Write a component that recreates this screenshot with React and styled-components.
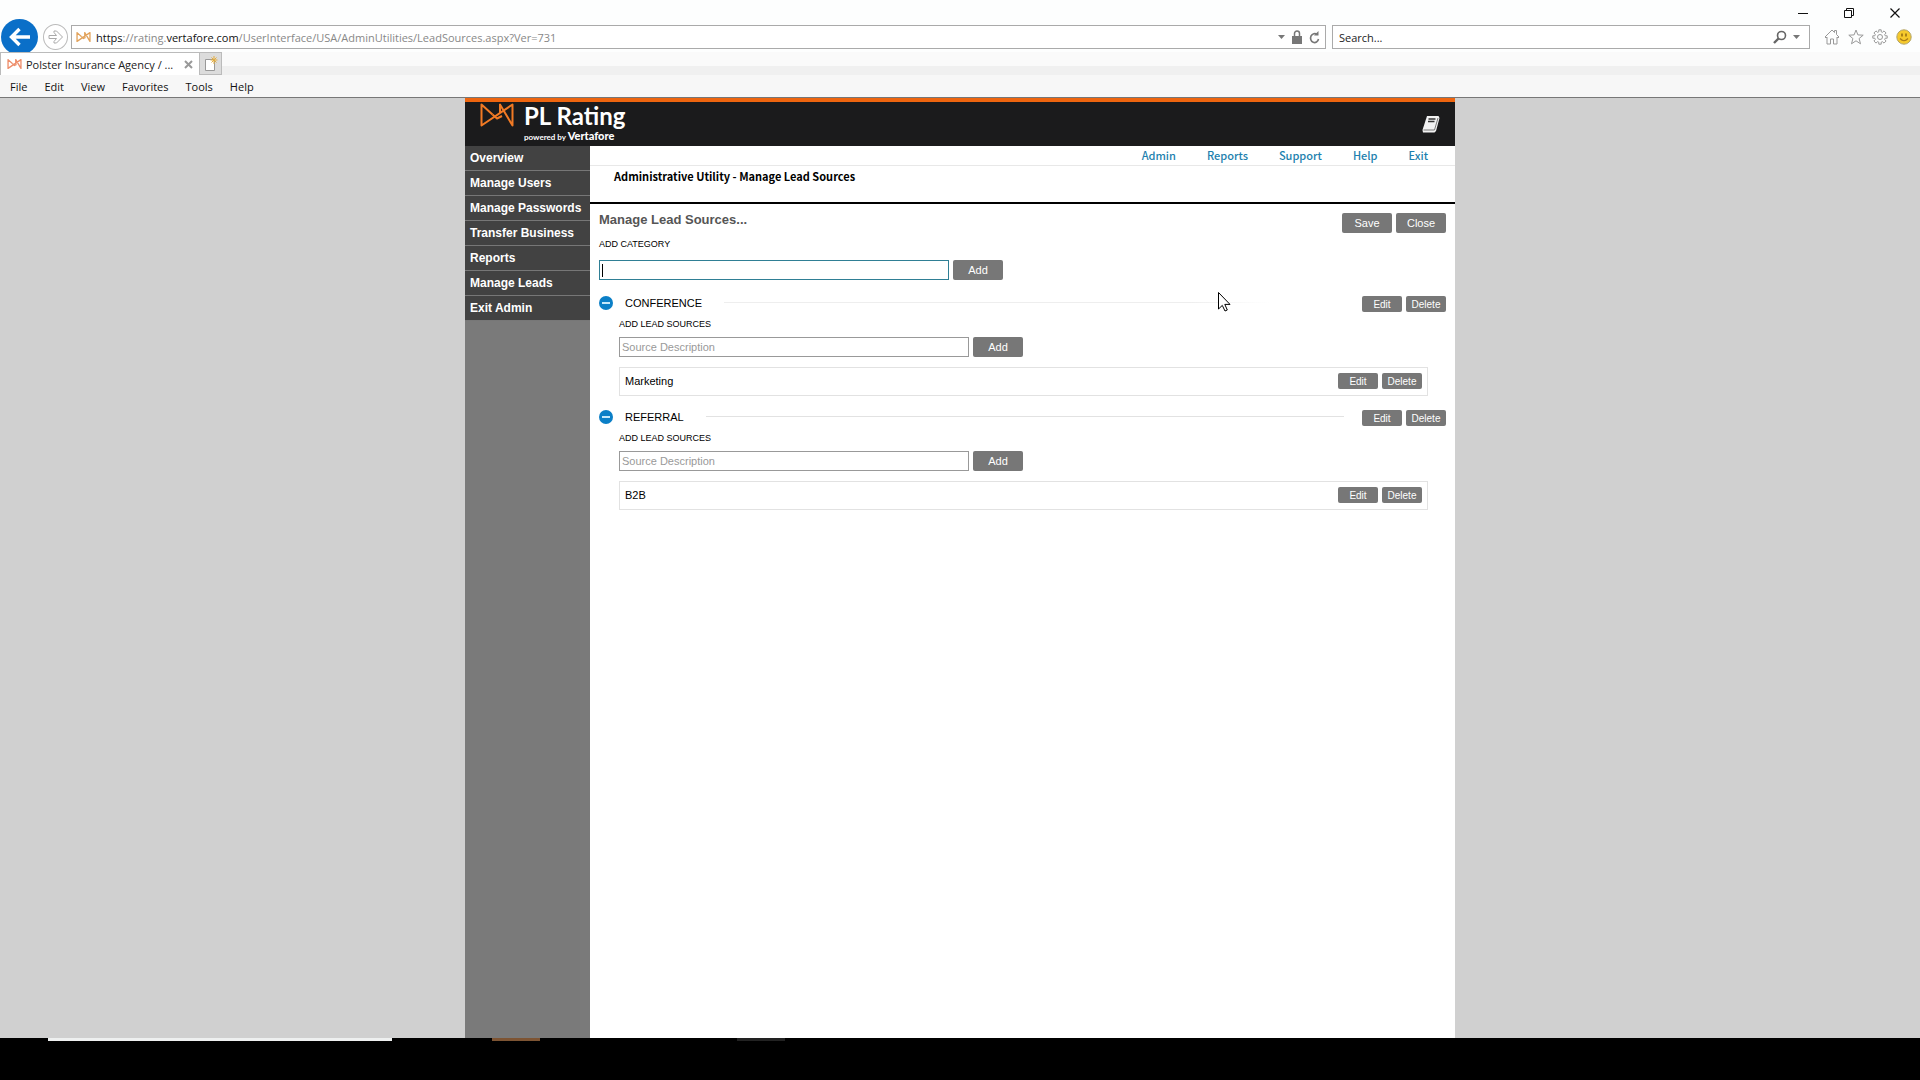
import React from "react";
import styled, { createGlobalStyle } from "styled-components";

const GlobalStyle = createGlobalStyle`
  * {
    box-sizing: border-box;
  }

  body {
    margin: 0;
    background: #000;
    font-family: "Liberation Sans", Arial, sans-serif;
    font-size: 12px;
  }

  button,
  input {
    font-family: inherit;
  }

  h1,
  h2,
  h3,
  ul {
    margin: 0;
    padding: 0;
  }
`;

const menus = ["File", "Edit", "View", "Favorites", "Tools", "Help"];
const topLinks = ["Admin", "Reports", "Support", "Help", "Exit"];
const sideLinks = [
  "Overview",
  "Manage Users",
  "Manage Passwords",
  "Transfer Business",
  "Reports",
  "Manage Leads",
  "Exit Admin",
];
const categories = [
  { id: "conference", name: "CONFERENCE", sources: ["Marketing"], faded: true },
  { id: "referral", name: "REFERRAL", sources: ["B2B"], faded: false },
];

export default function App() {
  return (
    <Screen>
      <GlobalStyle />
      <Browser />
      <Viewport>
        <Page>
          <Banner>
            <Brand>
              <VertaforeMark width={34} height={24} strokeWidth={2} color="#f27a24" />
              <BrandText>
                <BrandName>PL Rating</BrandName>
                <BrandBy>
                  powered by <strong>Vertafore</strong>
                </BrandBy>
              </BrandText>
            </Brand>
            <IconButton type="button" aria-label="Guide">
              <BookIcon />
            </IconButton>
          </Banner>
          <Columns>
            <Sidebar>
              {sideLinks.map((label) => (
                <SideLink key={label} href="#">
                  {label}
                </SideLink>
              ))}
            </Sidebar>
            <Main>
              <TopNav>
                {topLinks.map((label) => (
                  <TopLink key={label} href="#">
                    {label}
                  </TopLink>
                ))}
              </TopNav>
              <PageTitle>Administrative Utility - Manage Lead Sources</PageTitle>
              <LeadSources />
            </Main>
          </Columns>
        </Page>
      </Viewport>
      <Taskbar>
        <TaskStrip $left={48} $width={344} $color="#eef0f0" />
        <TaskStrip $left={100} $width={48} $color="#7d5433" />
        <TaskStrip $left={197} $width={48} $color="#222" />
      </Taskbar>
    </Screen>
  );
}

function Browser() {
  return (
    <Chrome>
      <WindowButtons>
        <IconButton type="button" aria-label="Minimize">
          <svg width="10" height="10">
            <path d="M0 5.5H10" stroke="#111" />
          </svg>
        </IconButton>
        <IconButton type="button" aria-label="Restore">
          <svg width="10" height="10" fill="none" stroke="#111">
            <path d="M.5 2.5h7v7h-7zM2.500 2.500V.5h7v7h-2" />
          </svg>
        </IconButton>
        <IconButton type="button" aria-label="Close window">
          <svg width="10" height="10">
            <path d="M.5 .5L9.500 9.500M9.500 .5L.5 9.500" stroke="#111" strokeWidth="1.200" />
          </svg>
        </IconButton>
      </WindowButtons>
      <AddressRow>
        <BackButton type="button" aria-label="Back">
          <svg width="24" height="20" fill="none" stroke="#fff" strokeWidth="3.400">
            <path d="M22 10H4M11.500 2L3.500 10L11.500 18" />
          </svg>
        </BackButton>
        <ForwardButton type="button" aria-label="Forward">
          <svg width="16" height="14" fill="none" stroke="#aaa">
            <path d="M1 5.500H8.500L6 2.500V1H8.500L14.500 7L8.500 13H6V11.500L8.500 8.500H1Z" />
          </svg>
        </ForwardButton>
        <AddressBar>
          <VertaforeMark width={15} height={10} strokeWidth={1.4} color="#e2a35c" />
          <Url>
            <b>https</b>://rating.<b>vertafore.com</b>
            /UserInterface/USA/AdminUtilities/LeadSources.aspx?Ver=731
          </Url>
          <BarIcons>
            <Caret />
            <svg width="10" height="14" viewBox="0 0 10 14">
              <path d="M2.500 6V3.500a2.500 2.500 0 0 1 5 0V6" fill="none" stroke="#777" strokeWidth="1.500" />
              <path d="M0 6H10V14H0Z" fill="#777" />
            </svg>
            <svg width="11" height="13" viewBox="0 0 11 13">
              <path d="M8 3.500A4 4.500 0 1 0 9.500 8" fill="none" stroke="#777" strokeWidth="1.600" />
              <path d="M5 4.500H9.500V0Z" fill="#777" />
            </svg>
          </BarIcons>
        </AddressBar>
        <SearchBar>
          <SearchInput aria-label="Search the web" placeholder="Search..." />
          <svg width="14" height="14" viewBox="0 0 14 14" fill="none" stroke="#666">
            <circle cx="8.500" cy="5.500" r="4" strokeWidth="1.600" />
            <path d="M5.500 8.500L1 13" strokeWidth="2.400" />
          </svg>
          <Caret />
        </SearchBar>
        <Tools>
          <svg width="16" height="16" viewBox="0 0 16 16" fill="none" stroke="#999">
            <path d="M1 8L8 1L10.500 3.500V1.500H12.500V5.500L15 8L14 9L13 8V15H9.500V10H6.500V15H3V8L2 9Z" />
          </svg>
          <svg width="16" height="16" viewBox="0 0 16 16" fill="none" stroke="#999">
            <path d="M8 1L9.900 5.900L15.200 6.200L11.100 9.500L12.500 14.800L8 11.800L3.500 14.800L4.900 9.500L.8 6.200L6.100 5.900Z" />
          </svg>
          <svg width="16" height="16" viewBox="0 0 16 16" fill="none" stroke="#999">
            <path d="M6.800 .8H9.200V2.800L10.500 3.300L12 1.900L14.100 4L12.700 5.500L13.200 6.800H15.200V9.200H13.200L12.700 10.500L14.100 12L12 14.100L10.500 12.700L9.200 13.200V15.200H6.800V13.200L5.500 12.700L4 14.100L1.900 12L3.300 10.500L2.800 9.200H.8V6.800H2.800L3.300 5.500L1.900 4L4 1.900L5.500 3.300L6.800 2.800Z" />
            <circle cx="8" cy="8" r="2.500" />
          </svg>
          <svg width="16" height="16" viewBox="0 0 16 16">
            <circle cx="8" cy="8" r="7.200" fill="#f6c92c" stroke="#b3a468" />
            <path d="M6 4.500V7.500M10 4.500V7.500" stroke="#8a6312" strokeWidth="1.400" />
            <path d="M4 9.500Q8 14 12 9.500" fill="none" stroke="#a87b17" strokeWidth="1.200" />
          </svg>
        </Tools>
      </AddressRow>
      <TabStrip>
        <Tab>
          <VertaforeMark width={15} height={10} strokeWidth={1.4} color="#ee8e6b" />
          <TabTitle>Polster Insurance Agency / ...</TabTitle>
          <IconButton type="button" aria-label="Close tab">
            <svg width="9" height="9">
              <path d="M1 1L8 8M8 1L1 8" stroke="#999" strokeWidth="2" />
            </svg>
          </IconButton>
        </Tab>
        <NewTab type="button" aria-label="New tab">
          <svg width="14" height="16" viewBox="0 0 14 16">
            <path d="M1.500 3.500H10.500V14.500H1.500Z" fill="#fff" stroke="#999" />
            <path d="M10 0V8M6.500 4H13.500M7.500 1.500L12.500 6.500M12.500 1.500L7.500 6.500" stroke="#e5ad3d" />
          </svg>
        </NewTab>
      </TabStrip>
      <MenuBar>
        {menus.map((label) => (
          <MenuButton key={label} type="button">
            {label}
          </MenuButton>
        ))}
      </MenuBar>
    </Chrome>
  );
}

function LeadSources() {
  return (
    <Content>
      <HeadingRow>
        <Heading>Manage Lead Sources...</Heading>
        <ButtonGroup>
          <Button type="button">Save</Button>
          <Button type="button">Close</Button>
        </ButtonGroup>
      </HeadingRow>
      <FieldLabel htmlFor="category">ADD CATEGORY</FieldLabel>
      <AddRow $gapTop={7} $gapBottom={2}>
        <TextField id="category" $active />
        <Button type="button">Add</Button>
      </AddRow>
      {categories.map((category) => (
        <Category key={category.id} category={category} />
      ))}
      <Cursor width="13" height="20" viewBox="0 0 13 20">
        <path
          d="M.5 .5V17L4.300 13.400L7 19L9.300 18L6.800 12.400H12Z"
          fill="#fff"
          stroke="#000"
        />
      </Cursor>
    </Content>
  );
}

function Category({ category }) {
  return (
    <CategoryBlock>
      <CategoryHead>
        <Toggle type="button" aria-label={`Collapse ${category.name}`}>
          <svg width="14" height="14">
            <circle cx="7" cy="7" r="7" fill="#0b7fc7" />
            <path d="M3 7H11" stroke="#c5e8fa" strokeWidth="2" />
          </svg>
        </Toggle>
        <CategoryName>{category.name}</CategoryName>
        <Rule $faded={category.faded} />
        <ButtonGroup>
          <Button type="button" $small>
            Edit
          </Button>
          <Button type="button" $small>
            Delete
          </Button>
        </ButtonGroup>
      </CategoryHead>
      <CategoryBody>
        <FieldLabel htmlFor={category.id}>ADD LEAD SOURCES</FieldLabel>
        <AddRow $gapTop={4}>
          <TextField id={category.id} placeholder="Source Description" />
          <Button type="button">Add</Button>
        </AddRow>
        <SourceList>
          {category.sources.map((source) => (
            <Source key={source}>
              {source}
              <ButtonGroup>
                <Button type="button" $small>
                  Edit
                </Button>
                <Button type="button" $small>
                  Delete
                </Button>
              </ButtonGroup>
            </Source>
          ))}
        </SourceList>
      </CategoryBody>
    </CategoryBlock>
  );
}

function VertaforeMark({ width, height, color, strokeWidth }) {
  return (
    <svg
      width={width}
      height={height}
      viewBox="0 0 34 24"
      fill="none"
      stroke={color}
      strokeWidth={(strokeWidth * 34) / width}
      strokeLinejoin="round"
    >
      <path d="M12.500 11.500L1.500 1.500V22.500L32.500 1.500V22.500L20 1.500V9.500" />
      <path d="M12.500 11.500L17 15.500L22 13" />
    </svg>
  );
}

function BookIcon() {
  return (
    <svg width="18" height="18" viewBox="0 0 18 18">
      <path d="M5 1H16.500L17.500 3L14 16L12.500 17.500H1L.5 15Z" fill="#f2f2f2" />
      <path d="M1.500 15H12.500L16 3" fill="none" stroke="#777" />
      <path d="M6.500 4H13.500M6 6.500H12.500" stroke="#333" strokeWidth="1.300" />
    </svg>
  );
}

const Caret = () => (
  <svg width="7" height="4">
    <path d="M0 0H7L3.500 4Z" fill="#777" />
  </svg>
);

const Screen = styled.div`
  min-height: 100vh;
  display: flex;
  flex-direction: column;
`;

const IconButton = styled.button`
  display: flex;
  padding: 0;
  border: 0;
  background: none;
`;

const Chrome = styled.header`
  background: #fdfefe;
  border-bottom: 1px solid #777;
  font-family: "Open Sans", "Segoe UI", sans-serif;
`;

const WindowButtons = styled.div`
  height: 25px;
  display: flex;
  justify-content: flex-end;
  align-items: center;
  gap: 36px;
  padding-right: 20px;
`;

const AddressRow = styled.div`
  height: 27px;
  display: flex;
  align-items: flex-start;
`;

const BackButton = styled.button`
  width: 37px;
  height: 36px;
  flex: none;
  display: flex;
  align-items: center;
  justify-content: center;
  margin: -6px 5px 0 1px;
  padding: 0;
  border: 0;
  border-radius: 50%;
  background: #0a6fc8;
`;

const ForwardButton = styled.button`
  width: 25px;
  height: 26px;
  flex: none;
  display: flex;
  align-items: center;
  justify-content: center;
  margin: -1px 3px 0 0;
  padding: 0;
  border: 1px solid #bbb;
  border-radius: 50%;
  background: #fff;
`;

const AddressBar = styled.div`
  flex: 1;
  height: 24px;
  display: flex;
  align-items: center;
  gap: 5px;
  padding: 0 5px 0 4px;
  border: 1px solid #aaa;
  background: #fff;
`;

const Url = styled.span`
  flex: 1;
  color: #888;
  font-size: 11px;
  white-space: nowrap;

  b {
    color: #111;
    font-weight: 400;
  }
`;

const BarIcons = styled.div`
  display: flex;
  align-items: center;
  gap: 7px;
`;

const SearchBar = styled.div`
  width: 25%;
  max-width: 478px;
  height: 24px;
  display: flex;
  align-items: center;
  gap: 6px;
  margin-left: 6px;
  padding: 0 9px 0 6px;
  border: 1px solid #aaa;
  background: #fff;
`;

const SearchInput = styled.input`
  flex: 1;
  padding: 0;
  border: 0;
  outline: 0;
  font-size: 11px;

  &::placeholder {
    color: #222;
  }
`;

const Tools = styled.div`
  display: flex;
  gap: 8px;
  padding: 4px 8px 0 14px;
`;

const TabStrip = styled.div`
  position: relative;
  height: 23px;
  display: flex;
  background: linear-gradient(#fafafa 60%, #f0f0f0 60%);
`;

const Tab = styled.div`
  width: 200px;
  display: flex;
  align-items: center;
  gap: 4px;
  padding: 0 6px;
  border: solid #bbb;
  border-width: 1px 1px 0;
  background: #fff;
`;

const TabTitle = styled.span`
  flex: 1;
  font-size: 11px;
  color: #222;
  white-space: nowrap;
`;

const NewTab = styled.button`
  width: 22px;
  display: flex;
  align-items: center;
  justify-content: center;
  padding: 0;
  border: 1px solid #bbb;
  border-left: 0;
  background: #dcdcdc;
`;

const MenuBar = styled.nav`
  height: 22px;
  display: flex;
  align-items: center;
  gap: 17px;
  padding-left: 10px;
  background: #f7f7f7;
`;

const MenuButton = styled.button`
  padding: 0;
  border: 0;
  background: none;
  color: #111;
  font-size: 11px;
`;

const Viewport = styled.div`
  flex: 1;
  display: flex;
  justify-content: center;
  background: #d0d0d0;
`;

const Page = styled.div`
  width: 100%;
  max-width: 990px;
  display: flex;
  flex-direction: column;
`;

const Banner = styled.header`
  height: 48px;
  display: flex;
  justify-content: space-between;
  align-items: center;
  padding: 0 15px;
  border-top: 4px solid #ee650f;
  background: #1b1b1c;
`;

const Brand = styled.div`
  display: flex;
  align-items: flex-start;
  gap: 10px;
`;

const BrandText = styled.div`
  color: #fff;
  font-family: Lato, sans-serif;
  font-weight: 700;
`;

const BrandName = styled.div`
  font-size: 24px;
  line-height: 25px;
`;

const BrandBy = styled.div`
  font-size: 8px;
  line-height: 16px;

  strong {
    font-size: 11px;
  }
`;

const Columns = styled.div`
  flex: 1;
  display: flex;
`;

const Sidebar = styled.nav`
  width: 125px;
  flex: none;
  background: #7a7a7a;
`;

const SideLink = styled.a`
  display: block;
  padding-left: 5px;
  border-bottom: 1px solid #777;
  background: #424242;
  color: #fff;
  font-size: 12px;
  font-weight: 700;
  line-height: 24px;
  text-decoration: none;
`;

const Main = styled.main`
  flex: 1;
  background: #fff;
`;

const TopNav = styled.nav`
  height: 20px;
  display: flex;
  justify-content: flex-end;
  align-items: flex-start;
  gap: 31px;
  padding-right: 27px;
  border-bottom: 1px solid #e8e8e8;
`;

const TopLink = styled.a`
  color: #1d7fae;
  font-family: "Noto Sans CJK JP", sans-serif;
  font-size: 11px;
  font-weight: 500;
  line-height: 18px;
  text-decoration: none;
`;

const PageTitle = styled.h1`
  height: 38px;
  padding-left: 24px;
  border-bottom: 2px solid #000;
  font-family: "Noto Sans CJK JP", sans-serif;
  font-size: 11px;
  font-weight: 700;
  line-height: 20px;
`;

const Content = styled.section`
  position: relative;
  padding: 9px 9px 24px;
`;

const HeadingRow = styled.div`
  display: flex;
  justify-content: space-between;
  align-items: flex-start;
`;

const Heading = styled.h2`
  color: #555;
  font-size: 13px;
  line-height: 13px;
`;

const ButtonGroup = styled.div`
  display: flex;
  gap: 4px;
`;

const Button = styled.button`
  width: ${(props) => (props.$small ? 40 : 50)}px;
  height: ${(props) => (props.$small ? 16 : 20)}px;
  padding: 0;
  border: 0;
  border-radius: 2px;
  background: #777;
  color: #fff;
  font-size: ${(props) => (props.$small ? 10 : 11)}px;
`;

const FieldLabel = styled.label`
  display: block;
  margin-top: 2px;
  font-size: 9px;
  line-height: 18px;
`;

const AddRow = styled.div`
  display: flex;
  gap: 4px;
  margin-top: ${(props) => props.$gapTop}px;
  margin-bottom: ${(props) => props.$gapBottom || 0}px;
`;

const TextField = styled.input`
  width: 350px;
  height: 20px;
  padding: 0 2px;
  border: 1px solid ${(props) => (props.$active ? "#2f7f95" : "#999")};
  outline: 0;
  background: ${(props) =>
    props.$active
      ? "linear-gradient(#000, #000) 2px center / 1px 13px no-repeat #fff"
      : "#fff"};
  font-size: 11px;

  &::placeholder {
    color: #999;
  }
`;

const CategoryBlock = styled.section`
  padding-top: 14px;
`;

const CategoryHead = styled.div`
  height: 16px;
  display: flex;
  align-items: flex-start;
`;

const Toggle = styled(IconButton)`
  margin-right: 12px;
`;

const CategoryName = styled.h3`
  font-size: 11px;
  font-weight: 400;
  line-height: 14px;
`;

const Rule = styled.div`
  flex: 1;
  height: 1px;
  margin: 6px 18px 0 22px;
  background: ${(props) =>
    props.$faded ? "linear-gradient(90deg, #eee 75%, #fff 88%)" : "#e2e2e2"};
`;

const CategoryBody = styled.div`
  padding: 1px 18px 0 20px;

  ${FieldLabel} {
    margin-top: 0;
    padding-top: 2px;
  }
`;

const SourceList = styled.ul`
  margin-top: 10px;
  list-style: none;
`;

const Source = styled.li`
  height: 29px;
  display: flex;
  justify-content: space-between;
  align-items: flex-start;
  padding: 5px 5px 0;
  border: 1px solid #e2e2e2;
  font-size: 11px;
  line-height: 16px;
`;

const Cursor = styled.svg`
  position: absolute;
  top: 88px;
  left: 628px;
`;

const Taskbar = styled.footer`
  height: 42px;
  display: flex;
  background: #000;
`;

const TaskStrip = styled.div`
  width: ${(props) => props.$width}px;
  height: 3px;
  margin-left: ${(props) => props.$left}px;
  background: ${(props) => props.$color};
`;
